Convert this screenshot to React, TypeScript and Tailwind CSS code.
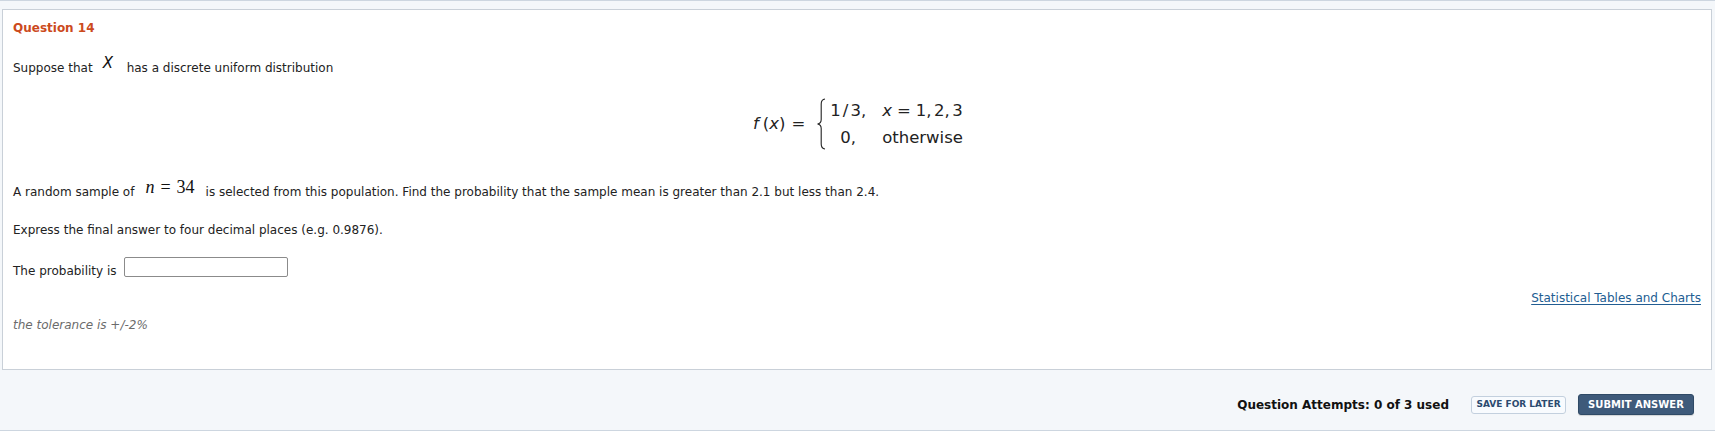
import React from "react";

function Brace() {
  return (
    <svg width="10" height="52" viewBox="0 0 10 52" className="block">
      <path
        d="M9 1 Q5.2 1.5 5.2 6 L5.2 21.5 Q5.2 25.5 1.5 26 Q5.2 26.5 5.2 30.5 L5.2 46 Q5.2 50.5 9 51"
        fill="none"
        stroke="#222"
        strokeWidth="1.1"
      />
    </svg>
  );
}

export default function App() {
  return (
    <div className="w-[1715px] h-[440px] bg-white font-['DejaVu_Sans',sans-serif] text-[#222]">
      <div className="h-[431px] bg-[#f4f7fa] border-t border-b border-[#cdd6e0] flex flex-col">
        <div className="ml-[2px] mt-[8px] w-[1710px] h-[361px] bg-white border border-[#c9d0d8] px-[10px] pt-[10px] flex flex-col text-[12px]">
          <div className="h-[16px] leading-[16px] font-bold text-[#cc4a1d]">Question 14</div>

          <div className="mt-[24px] h-[16px] leading-[16px] whitespace-nowrap">
            Suppose that
            <span className="inline-block w-[11px] ml-[10px] mr-[13px] italic text-[15px] leading-[0] align-[4px] text-[#111]">
              X
            </span>
            has a discrete uniform distribution
          </div>

          <div className="mt-[21px] flex items-center justify-center text-[16.5px] text-[#222] pl-[2px]">
            <span className="whitespace-nowrap">
              <span className="italic">f</span>
              <span className="ml-[4px]">(</span>
              <span className="italic">x</span>
              <span>)</span>
              <span className="ml-[6px]">=</span>
            </span>
            <span className="ml-[11px] mr-[4px]">
              <Brace />
            </span>
            <div className="grid grid-cols-[auto_auto] gap-x-[16px] leading-[27px] whitespace-nowrap">
              <span className="text-center">
                1<span className="mx-[2px]">/</span>3,
              </span>
              <span>
                <span className="italic">x</span>
                <span className="mx-[5px]">=</span>
                1,<span className="ml-[2.5px]">2,</span>
                <span className="ml-[2.5px]">3</span>
              </span>
              <span className="text-center">0,</span>
              <span>otherwise</span>
            </div>
          </div>

          <div className="mt-[33px] h-[16px] leading-[16px] whitespace-nowrap">
            A random sample of
            <span className="inline-block ml-[11px] mr-[11px] font-['Liberation_Serif',serif] text-[18px] leading-[0] align-[3px] text-[#111]">
              <span className="italic">n</span>
              <span className="mx-[6px]">=</span>
              <span>34</span>
            </span>
            is selected from this population. Find the probability that the sample mean is greater than 2.1 but less than 2.4.
          </div>

          <div className="mt-[22px] h-[16px] leading-[16px]">
            Express the final answer to four decimal places (e.g. 0.9876).
          </div>

          <div className="mt-[19px] h-[20px] flex items-end">
            <span className="leading-[14px] -mb-[1px]">The probability is</span>
            <input
              type="text"
              className="ml-[7px] w-[164px] h-[20px] border border-[#8b8b8b] rounded-[2px] bg-white outline-none"
            />
          </div>

          <div className="mt-[13px] h-[16px] leading-[16px] flex justify-end">
            <a href="#" className="text-[#225d92] underline underline-offset-[2px]">
              Statistical Tables and Charts
            </a>
          </div>

          <div className="mt-[11px] h-[16px] leading-[16px] italic text-[#6b6b6b]">
            the tolerance is +/-2%
          </div>
        </div>

        <div className="h-[60px] pt-[9px] pr-[21px] flex items-center justify-end">
          <span className="font-bold text-[12px] text-[#111] mr-[22px] whitespace-nowrap">
            Question Attempts: 0 of 3 used
          </span>
          <button className="w-[95px] h-[18px] flex items-center justify-center rounded-[3px] border border-[#c3d0de] bg-[#f8fbfe] font-bold text-[9px] text-[#2b4a6f] whitespace-nowrap">
            SAVE FOR LATER
          </button>
          <button className="ml-[12px] w-[116px] h-[21px] flex items-center justify-center rounded-[3px] border border-[#2f4a66] bg-[#3e5a7a] shadow-[0_1px_1px_rgba(0,0,0,0.15)] font-bold text-[10px] text-white whitespace-nowrap">
            SUBMIT ANSWER
          </button>
        </div>
      </div>
    </div>
  );
}
